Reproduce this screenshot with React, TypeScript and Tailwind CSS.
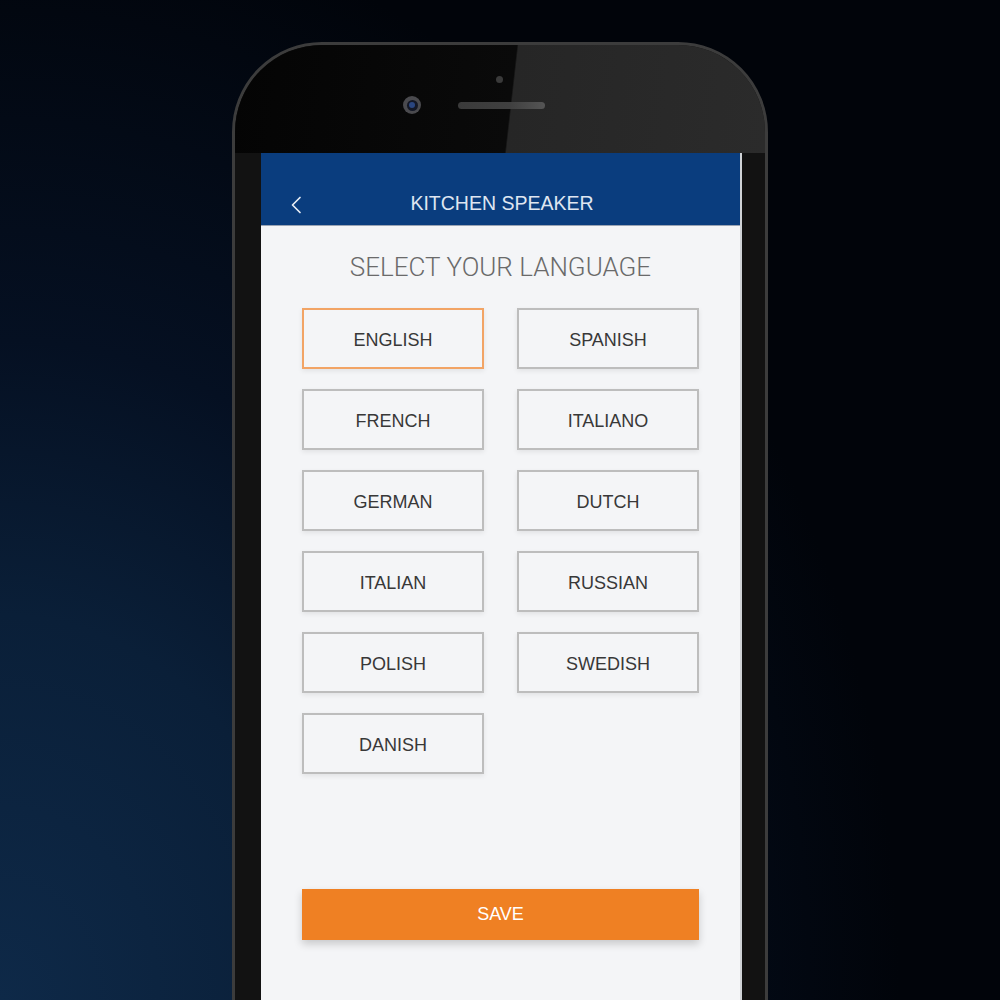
import React from "react";

const langs = [
  "ENGLISH",
  "SPANISH",
  "FRENCH",
  "ITALIANO",
  "GERMAN",
  "DUTCH",
  "ITALIAN",
  "RUSSIAN",
  "POLISH",
  "SWEDISH",
  "DANISH",
];

export default function App() {
  return (
    <div className="w-[1000px] h-[1000px] overflow-hidden flex justify-center pt-[42px] bg-[radial-gradient(ellipse_90%_110%_at_0%_100%,#0e2948_0%,#0a1f38_35%,#051022_60%,#01040a_100%)]">
      <div className="w-[536px] h-[1100px] shrink-0 rounded-[90px] border-[3px] border-[#3c3c3c] bg-[#121212] overflow-hidden flex flex-col">
        {/* top bezel */}
        <div className="h-[108px] shrink-0 relative bg-[linear-gradient(96.5deg,#040404_0%,#0a0a0a_52%,#262626_52.3%,#2b2b2b_100%)]">
          <div className="absolute left-[168px] top-[51px] w-[18px] h-[18px] rounded-full bg-[#4a4a4e] flex items-center justify-center">
            <div className="w-[11px] h-[11px] rounded-full bg-[#141826] flex items-center justify-center">
              <div className="w-[6px] h-[6px] rounded-full bg-[#2a4680]" />
            </div>
          </div>
          <div className="absolute left-[261px] top-[31px] w-[7px] h-[7px] rounded-full bg-[#3a3a3a]" />
          <div className="absolute left-[223px] top-[57px] w-[87px] h-[7px] rounded-full bg-[linear-gradient(90deg,#3a3a3a_0%,#404040_60%,#555_100%)]" />
        </div>
        {/* screen row */}
        <div className="flex-1 flex pl-[26px] pr-[24px]">
          <div className="flex-1 flex flex-col bg-[#f4f5f7] border-r-[2px] border-[#cfd2d6]">
            <div className="h-[73px] shrink-0 bg-[#0a3d7e] flex items-center pt-[30px] pl-[29px] pr-[28px] border-b border-[#9aa4b4]">
              <svg width="12" height="18" viewBox="0 0 12 18" className="shrink-0 mt-[1px]">
                <polyline points="10,1.5 2.5,9 10,16.5" fill="none" stroke="#e8edf5" strokeWidth="1.7" strokeLinecap="round" strokeLinejoin="round" />
              </svg>
              <div className="flex-1 text-center pr-[10px] text-[19.5px] text-[#dfe6f1] font-['Liberation_Sans',Arial,sans-serif]">
                KITCHEN SPEAKER
              </div>
            </div>
            <div className="flex flex-col px-[41px]">
              <div className="text-center mt-[26px] text-[26px] leading-[30px] text-[#6a6a6a] font-light font-['Roboto',sans-serif]">
                SELECT YOUR LANGUAGE
              </div>
              <div className="grid grid-cols-[182px_182px] gap-x-[33px] gap-y-[20px] mt-[26px]">
                {langs.map((l, i) => (
                  <div
                    key={l}
                    className={
                      i === 0
                        ? "h-[61px] flex items-center justify-center pt-[3px] border-2 border-[#f2a465] bg-[#f4f5f7] shadow-[0_2px_5px_rgba(0,0,0,0.08)] text-[18px] text-[#383838] font-['Liberation_Sans',Arial,sans-serif]"
                        : "h-[61px] flex items-center justify-center pt-[3px] border-2 border-[#bdbdbd] bg-[#f4f5f7] shadow-[0_2px_5px_rgba(0,0,0,0.08)] text-[18px] text-[#383838] font-['Liberation_Sans',Arial,sans-serif]"
                    }
                  >
                    {l}
                  </div>
                ))}
              </div>
              <div className="mt-[115px] h-[51px] bg-[#ef8023] flex items-center justify-center text-white text-[18px] font-['Liberation_Sans',Arial,sans-serif] shadow-[0_4px_8px_rgba(0,0,0,0.18)]">
                SAVE
              </div>
            </div>
          </div>
        </div>
      </div>
    </div>
  );
}
